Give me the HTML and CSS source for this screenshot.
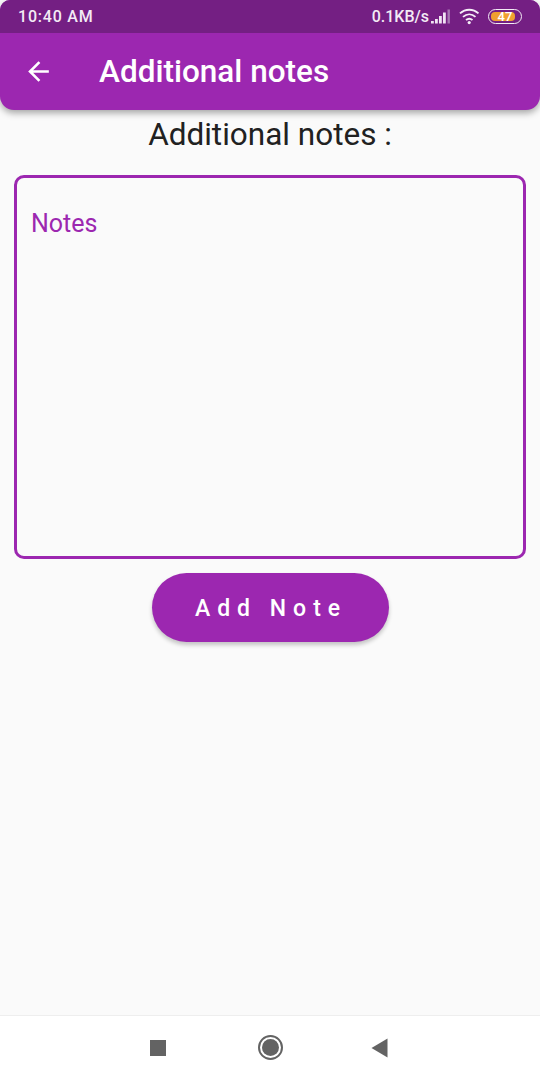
FILE: index.html
```html
<!DOCTYPE html>
<html lang="en">
<head>
<meta charset="utf-8">
<title>Additional notes</title>
<link rel="stylesheet" href="styles.css">
</head>
<body>
<div class="screen">
  <header class="appbar">
    <div class="statusbar">
      <span class="time">10:40 AM</span>
      <div class="status-right">
        <span class="speed">0.1KB/s</span>
        <svg class="signal" width="20" height="15" viewBox="0 0 20 15"><rect x="0" y="12" width="2.800" height="2.500" fill="#f0e4f3"/><rect x="4" y="10" width="2.800" height="4.500" fill="#f0e4f3"/><rect x="8" y="7" width="2.800" height="7.500" fill="#f0e4f3"/><rect x="12" y="3.500" width="2.800" height="11" fill="#f0e4f3"/><rect x="16.500" y="0.500" width="2.400" height="14" fill="#a878b4"/></svg>
        <svg class="wifi" width="21" height="17" viewBox="0 0 21 17"><g fill="none" stroke="#f5eef7" stroke-width="1.900"><path d="M1 5.400C6.400 .6 14.100 .6 19.500 5.400"/><path d="M4 8.900C7.800 5.500 12.700 5.500 16.500 8.900"/><path d="M7 12C9 10.400 11.500 10.400 13.500 12"/></g><circle cx="10.200" cy="14.600" r="1.600" fill="#f5eef7"/></svg>
        <div class="battery">
          <div class="battery-fill"></div>
          <span class="battery-text">47</span>
        </div>
      </div>
    </div>
    <div class="toolbar">
      <svg class="back" viewBox="0 0 24 24"><path d="M20 11H7.830l5.590-5.590L12 4l-8 8 8 8 1.410-1.410L7.830 13H20v-2z" fill="#fff"/></svg>
      <h1 class="title">Additional notes</h1>
    </div>
  </header>
  <main class="content">
    <h2 class="heading">Additional notes :</h2>
    <div class="notes-box"><span class="notes-label">Notes</span></div>
    <button class="add-btn" type="button">Add Note</button>
  </main>
  <nav class="navbar">
    <span class="nav-square"></span>
    <span class="nav-circle"><span class="nav-dot"></span></span>
    <svg class="nav-back" width="17" height="20" viewBox="0 0 17 20"><path d="M16.500 0.500V19.500L0.500 10Z" fill="#636363"/></svg>
  </nav>
</div>
</body>
</html>
```
FILE: styles.css
```css
* { box-sizing: border-box; }
html, body { margin: 0; padding: 0; }
body { width: 540px; height: 1080px; overflow: hidden; background: #fafafa; font-family: Roboto, "Liberation Sans", sans-serif; }
.screen { width: 540px; height: 1080px; display: flex; flex-direction: column; background: #fafafa; }
.appbar { height: 110px; flex: none; background: #9c27b0; border-radius: 10px 10px 14px 14px; box-shadow: 0 3px 7px rgba(0,0,0,.35); position: relative; z-index: 1; }
.statusbar { height: 33px; background: #741f83; border-radius: 10px 10px 0 0; padding: 0 18px; display: flex; align-items: center; justify-content: space-between; color: #f3ebf5; font-size: 16px; font-weight: 500; }
.time { font-size: 16px; letter-spacing: .8px; }
.status-right { display: flex; align-items: center; }
.speed { font-size: 16px; }
.signal { margin-left: 2px; }
.wifi { margin-left: 8px; }
.battery { width: 34px; height: 15px; margin-left: 8px; border: 1.5px solid #f3ebf5; border-radius: 8px; position: relative; overflow: hidden; display: flex; align-items: center; justify-content: center; }
.battery-fill { position: absolute; left: 2px; top: 2px; bottom: 2px; width: 24px; background: #f0a030; border-radius: 4px; }
.battery-text { position: relative; font-size: 13px; line-height: 12px; color: #fff; }
.toolbar { height: 77px; display: flex; align-items: center; padding-left: 23px; }
.back { width: 31px; height: 31px; flex: none; }
.title { margin: 0 0 0 45px; font-size: 31.5px; font-weight: 500; color: #fff; }
.content { flex: 1; display: flex; flex-direction: column; align-items: center; padding: 0 14px; }
.heading { margin: 6px 0 0; font-size: 31.5px; line-height: 38px; font-weight: 400; color: #212121; }
.notes-box { width: 100%; height: 384px; margin-top: 21px; border: 3px solid #9c27b0; border-radius: 10px; padding: 30px 14px; }
.notes-label { font-size: 25px; line-height: 32px; color: #9c27b0; }
.add-btn { width: 237px; height: 69px; margin-top: 14px; border: 0; border-radius: 35px; background: #9c27b0; color: #fff; font-family: inherit; font-size: 23px; font-weight: 500; letter-spacing: 7px; padding: 2px 0 0 2px; box-shadow: 0 3px 4px rgba(0,0,0,.22); }
.navbar { height: 65px; flex: none; background: #fff; border-top: 1px solid #eee; display: flex; align-items: center; padding-left: 150px; padding-bottom: 1px; }
.nav-square { width: 16px; height: 16px; background: #636363; }
.nav-circle { width: 25px; height: 25px; margin-left: 92px; border: 2px solid #636363; border-radius: 50%; display: flex; align-items: center; justify-content: center; }
.nav-dot { width: 17px; height: 17px; border-radius: 50%; background: #636363; }
.nav-back { margin-left: 88px; }
```
